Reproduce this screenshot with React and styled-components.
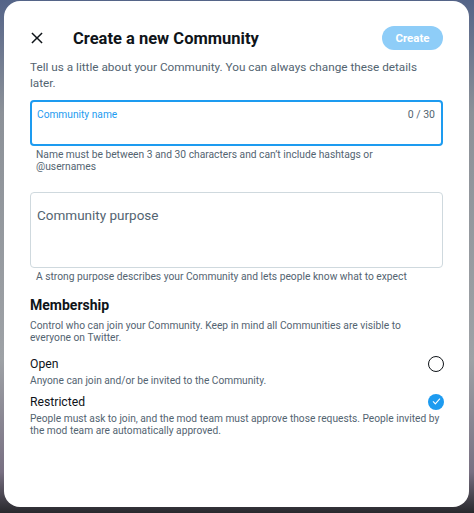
import styled, {createGlobalStyle} from "styled-components";
import {useState} from "react";

const GlobalStyle = createGlobalStyle`
    html, body {
        margin: 0;
        padding: 0;
    }
    body {
        font-family: Roboto, "Noto Sans", "Liberation Sans", sans-serif;
        color: rgb(15, 20, 25);
    }
    * {
        box-sizing: border-box;
    }
`;

const Backdrop = styled.div`
    width: 474px;
    height: 513px;
    padding: 1px 5px 6px 4px;
    background: linear-gradient(180deg, rgb(84, 100, 136) 0%, rgb(140, 145, 152) 22%, rgb(158, 162, 166) 70%, rgb(120, 112, 130) 92%, rgb(40, 40, 44) 100%);
`;

const Modal = styled.div`
    height: 100%;
    background-color: white;
    border-radius: 16px;
    padding: 0 26px;
    display: flex;
    flex-direction: column;
`;

const Header = styled.div`
    display: flex;
    align-items: center;
    height: 44px;
    margin-top: 15px;
`;

const CloseButton = styled.button`
    all: unset;
    width: 18px;
    height: 18px;
    margin-left: -2px;
    display: flex;
    cursor: pointer;
    color: rgb(15, 20, 25);
`;

const Title = styled.h2`
    margin: 0 0 0 27px;
    font-size: 16.5px;
    font-weight: 700;
    flex-grow: 1;
`;

const CreateButton = styled.button`
    all: unset;
    width: 61px;
    height: 24px;
    border-radius: 12px;
    background-color: rgb(142, 205, 248);
    color: white;
    font-size: 11.5px;
    font-weight: 700;
    text-align: center;
    line-height: 24px;
`;

const Description = styled.p`
    margin: 0;
    font-size: 11.75px;
    line-height: 15.5px;
    color: rgb(83, 100, 113);
`;

const Field = styled.label`
    display: block;
    position: relative;
    margin-top: ${p => p.$gap}px;
    height: ${p => p.$height}px;
    border: ${p => p.$focused ? "2px solid rgb(29, 155, 240)" : "1px solid rgb(207, 217, 222)"};
    border-radius: 4px;
    padding: ${p => p.$focused ? "6px 6px 0 5px" : "14px 7px 0 6px"};
`;

const FieldLabel = styled.span`
    display: block;
    font-size: ${p => p.$small ? "10.2px" : "13.5px"};
    line-height: ${p => p.$small ? "13px" : "17px"};
    color: ${p => p.$small ? "rgb(29, 155, 240)" : "rgb(83, 100, 113)"};
`;

const Counter = styled.span`
    position: absolute;
    top: 6px;
    right: 6px;
    font-size: 10.5px;
    line-height: 13px;
    color: rgb(83, 100, 113);
`;

const Helper = styled.div`
    padding: 0 24px 0 6px;
    margin-top: 3px;
    font-size: 10.25px;
    line-height: 12.4px;
    color: rgb(83, 100, 113);
`;

const SectionTitle = styled.h3`
    margin: 12px 0 0 0;
    font-size: 14px;
    line-height: 20px;
    font-weight: 700;
`;

const SectionText = styled.p`
    margin: 5px 0 0 0;
    font-size: 10.25px;
    line-height: 12.2px;
    color: rgb(83, 100, 113);
`;

const Option = styled.div`
    margin-top: ${p => p.$gap}px;
    cursor: pointer;
`;

const OptionRow = styled.div`
    display: flex;
    align-items: center;
    justify-content: space-between;
    height: 20px;
`;

const OptionTitle = styled.span`
    font-size: 12.2px;
    color: rgb(15, 20, 25);
`;

const OptionText = styled.div`
    margin-top: 1px;
    font-size: 10.2px;
    line-height: 12px;
    color: rgb(83, 100, 113);
`;

const Radio = styled.span`
    width: 16px;
    height: 16px;
    margin-right: -1px;
    border-radius: 50%;
    display: flex;
    align-items: center;
    justify-content: center;
    border: ${p => p.$checked ? "none" : "1.5px solid rgb(15, 20, 25)"};
    background-color: ${p => p.$checked ? "rgb(29, 155, 240)" : "transparent"};
    color: white;
`;

const CloseIcon = () => (
    <svg viewBox="0 0 24 24" width="18" height="18" fill="currentColor">
        <path d="M10.59 12L4.54 5.96l1.42-1.42L12 10.59l6.04-6.05 1.42 1.42L13.41 12l6.05 6.04-1.42 1.42L12 13.41l-6.04 6.05-1.42-1.42L10.59 12z"/>
    </svg>
);

const CheckIcon = () => (
    <svg viewBox="0 0 24 24" width="11" height="11" fill="none" stroke="currentColor" strokeWidth="2.4"
         strokeLinecap="round" strokeLinejoin="round">
        <path d="M5 12.5l4.5 4.5L19 6.5"/>
    </svg>
);

const options = [
    {id: "open", title: "Open", text: "Anyone can join and/or be invited to the Community.", gap: 9},
    {
        id: "restricted",
        title: "Restricted",
        text: "People must ask to join, and the mod team must approve those requests. People invited by the mod team are automatically approved.",
        gap: 5
    }
];

export default function App() {
    const [membership, setMembership] = useState("restricted");

    return (
        <Backdrop>
            <GlobalStyle/>
            <Modal>
                <Header>
                    <CloseButton aria-label="Close"><CloseIcon/></CloseButton>
                    <Title>Create a new Community</Title>
                    <CreateButton disabled>Create</CreateButton>
                </Header>
                <Description>
                    Tell us a little about your Community. You can always change these details later.
                </Description>

                <Field $gap={9} $height={46} $focused>
                    <FieldLabel $small>Community name</FieldLabel>
                    <Counter>0 / 30</Counter>
                </Field>
                <Helper>Name must be between 3 and 30 characters and can’t include hashtags or @usernames</Helper>

                <Field $gap={18} $height={76}>
                    <FieldLabel>Community purpose</FieldLabel>
                </Field>
                <Helper>A strong purpose describes your Community and lets people know what to expect</Helper>

                <SectionTitle>Membership</SectionTitle>
                <SectionText>
                    Control who can join your Community. Keep in mind all Communities are visible to everyone on
                    Twitter.
                </SectionText>

                {options.map(o => (
                    <Option key={o.id} $gap={o.gap} onClick={() => setMembership(o.id)}>
                        <OptionRow>
                            <OptionTitle>{o.title}</OptionTitle>
                            <Radio $checked={membership === o.id}>
                                {membership === o.id ? <CheckIcon/> : null}
                            </Radio>
                        </OptionRow>
                        <OptionText>{o.text}</OptionText>
                    </Option>
                ))}
            </Modal>
        </Backdrop>
    );
}
